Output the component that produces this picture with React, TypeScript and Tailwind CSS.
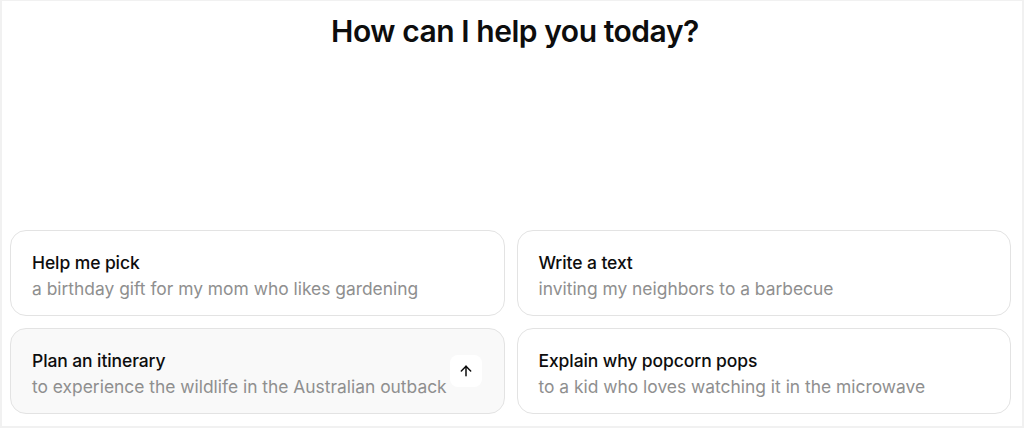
import { ArrowUp } from 'lucide-react'

const suggestions = [
  { title: 'Help me pick', sub: 'a birthday gift for my mom who likes gardening' },
  { title: 'Write a text', sub: 'inviting my neighbors to a barbecue' },
  { title: 'Plan an itinerary', sub: 'to experience the wildlife in the Australian outback', active: true },
  { title: 'Explain why popcorn pops', sub: 'to a kid who loves watching it in the microwave' },
]

export default function App() {
  return (
    <div
      className="flex h-[428px] w-[1024px] flex-col border-x-2 border-b-2 border-t border-[#f1f1f1] bg-white text-[#0d0d0d]"
      style={{ fontFamily: 'Inter, "Noto Sans", sans-serif' }}
    >
      <h1 className="pl-[6px] pt-[11px] text-center text-[30px] font-semibold leading-[38px] tracking-[-0.45px]">
        How can I help you today?
      </h1>
      <div className="mt-auto grid grid-cols-2 gap-3 pb-3 pl-2 pr-[11px]">
        {suggestions.map((s) => (
          <button
            key={s.title}
            className={`relative flex h-[86px] flex-col justify-center overflow-hidden rounded-2xl border border-[#e3e3e3] px-[21px] pt-[5px] text-left ${
              s.active ? 'bg-[#f9f9f9]' : 'bg-white'
            }`}
          >
            <div className="whitespace-nowrap text-[17.5px] font-medium leading-[26px] tracking-[-0.1px]">{s.title}</div>
            <div className="whitespace-nowrap text-[17.4px] leading-[26px] text-[#8f8f8f]">{s.sub}</div>
            {s.active && (
              <span className="absolute right-[22px] top-1/2 flex h-8 w-8 -translate-y-1/2 items-center justify-center rounded-lg bg-white">
                <ArrowUp size={16} strokeWidth={2.25} />
              </span>
            )}
          </button>
        ))}
      </div>
    </div>
  )
}
